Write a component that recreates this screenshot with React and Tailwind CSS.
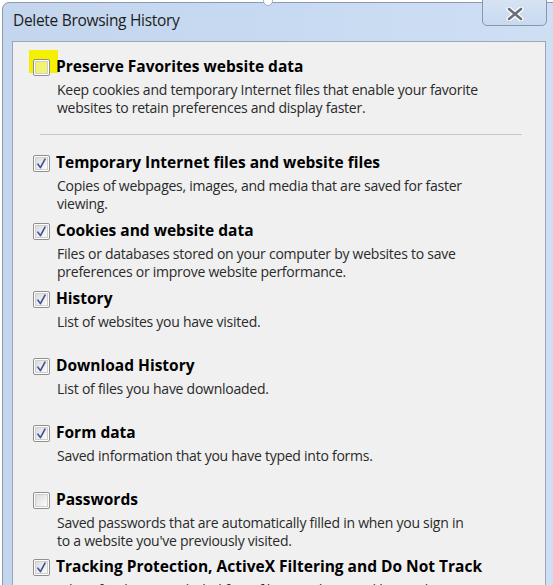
import React from "react";

const items = [
  {
    title: "Temporary Internet files and website files",
    lines: ["Copies of webpages, images, and media that are saved for faster", "viewing."],
    checked: true,
    h: "h-[68px]",
  },
  {
    title: "Cookies and website data",
    lines: ["Files or databases stored on your computer by websites to save", "preferences or improve website performance."],
    checked: true,
    h: "h-[68px]",
  },
  { title: "History", lines: ["List of websites you have visited."], checked: true, h: "h-[67px]" },
  { title: "Download History", lines: ["List of files you have downloaded."], checked: true, h: "h-[67px]" },
  { title: "Form data", lines: ["Saved information that you have typed into forms."], checked: true, h: "h-[67px]" },
  {
    title: "Passwords",
    lines: ["Saved passwords that are automatically filled in when you sign in", "to a website you've previously visited."],
    checked: false,
    h: "h-[67px]",
  },
  {
    title: "Tracking Protection, ActiveX Filtering and Do Not Track",
    lines: ["A list of websites excluded from filtering, data used by Tracking", "Protection to detect where sites might automatically be sharing details"],
    checked: true,
    h: "h-[67px]",
  },
];

const Checkbox = ({ checked, tint }) => (
  <div className="relative size-[17px] shrink-0 border border-[#8f8f8f] rounded-[2px] bg-white">
    <div
      className={`absolute inset-[1px] border border-[#cfcfcf] ${
        tint ? "bg-[#f0ec3a]/70" : "bg-gradient-to-br from-[#dcdcdc] to-[#fbfbfb]"
      }`}
    />
    {checked && (
      <svg viewBox="0 0 17 17" className="absolute -inset-[1px] size-[17px]">
        <path d="M4.5 8.6 L7.4 12.6 L12.3 3.6" fill="none" stroke="#3d4f96" strokeWidth="1.6" strokeLinejoin="round" />
      </svg>
    )}
  </div>
);

const Item = ({ title, lines, checked, h, highlight }) => (
  <div className={`relative ${h}`}>
    {highlight && <div className="absolute left-[-4px] top-[-7px] w-[29px] h-[23px] bg-[#f4f000]" />}
    <div className="relative h-[20px] flex items-center gap-[6px]">
      <Checkbox checked={checked} tint={highlight} />
      <span className="text-[15.5px] font-bold text-black">{title}</span>
    </div>
    <div className="mt-[4px] ml-[24px] text-[14px] leading-[18px] text-[#2a2a2a] tracking-[-0.25px]">
      {lines.map((l) => (
        <div key={l} className="whitespace-nowrap">{l}</div>
      ))}
    </div>
  </div>
);

export default function App() {
  return (
    <div
      className="relative w-[553px] h-[585px] overflow-hidden bg-white"
      style={{ fontFamily: '"Open Sans", "Noto Sans", sans-serif' }}
    >
      <div className="absolute left-[263px] top-[-4px] size-[10px] rounded-full bg-white border border-[#9fb3cc]" />
      <div className="ml-[2px] mt-[2px] w-[570px] h-[600px] border border-[#8a9ab0] rounded-tl-[7px] bg-gradient-to-r from-[#c3d6ee] via-[#c8daf1] to-[#cfe0f5] flex flex-col">
        <div className="h-[38px] shrink-0 flex items-start pl-[10px] pt-[6px]">
          <span className="text-[15.5px] text-[#1c1c1c] tracking-[-0.3px]">Delete Browsing History</span>
          <div className="ml-auto mr-[24px] -mt-[10px] w-[65px] h-[27px] border border-[#8797ad] rounded-b-[5px] bg-gradient-to-b from-[#d6e3f4] to-[#c8d9ef] flex items-center justify-center pt-[2px]">
            <svg viewBox="0 0 18 14" className="w-[18px] h-[14px]">
              <path d="M3 2 L15 12 M15 2 L3 12" stroke="#ffffff" strokeWidth="5" strokeLinecap="round" />
              <path d="M3 2 L15 12 M15 2 L3 12" stroke="#6b6f76" strokeWidth="2.6" strokeLinecap="round" />
            </svg>
          </div>
        </div>
        <div className="ml-[9px] w-[534px] flex-1 border border-[#9ba7b7] bg-[#f0f0f0] pl-[20px] pt-[15px]">
          <Item
            title="Preserve Favorites website data"
            lines={[
              "Keep cookies and temporary Internet files that enable your favorite",
              "websites to retain preferences and display faster.",
            ]}
            checked={false}
            h="h-[60px]"
            highlight
          />
          <div className="ml-[7px] mr-[23px] mt-[17px] mb-[18px] h-[1px] bg-[#c9c9c9]" />
          {items.map((it) => (
            <Item key={it.title} {...it} />
          ))}
        </div>
      </div>
    </div>
  );
}
